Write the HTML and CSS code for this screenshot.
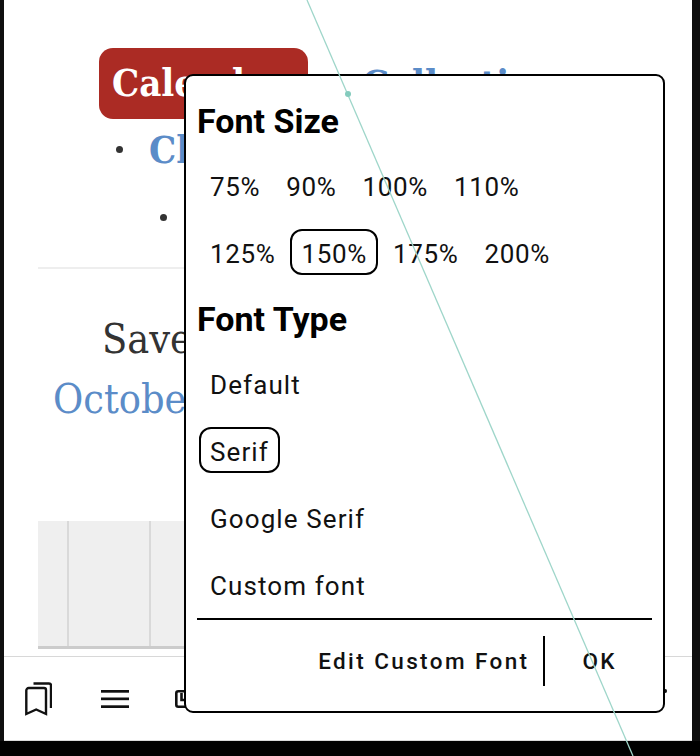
FILE: index.html
```html
<!DOCTYPE html>
<html lang="en">
<head>
<meta charset="utf-8">
<title>Font settings</title>
<link rel="stylesheet" href="styles.css">
</head>
<body>
<div class="screen">
  <main class="page">
    <nav class="nav">
      <div class="nav-top">
        <a class="pill">Calendar</a>
        <a class="nav-link">Collections</a>
      </div>
      <div class="nav-item"><span class="bullet"></span><a class="nav-link">Classes</a></div>
      <div class="nav-sub"><span class="bullet"></span></div>
    </nav>
    <hr class="rule">
    <p class="save">Save the date</p>
    <p class="date">October 2024</p>
    <div class="table"><i class="c1"></i><i class="c2"></i></div>
  </main>
  <footer class="toolbar">
    <svg class="i-book" viewBox="0 0 27 34" width="27" height="34" fill="none" stroke="#111" stroke-width="2.4"><path d="M1.3 32V8.5a2.5 2.5 0 0 1 2.5-2.5H19a2 2 0 0 1 2 2V32l-9.800-4.500Z"/><path d="M8.500 1.500H24a2 2 0 0 1 2 2V26"/></svg>
    <svg class="i-menu" viewBox="0 0 28 18" width="28" height="18" fill="#111"><rect y="0" width="28" height="2.700"/><rect y="7.500" width="28" height="2.700"/><rect y="15.300" width="28" height="2.700"/></svg>
    <svg class="i-clock" viewBox="0 0 24 18" width="24" height="18" fill="none" stroke="#111" stroke-width="2.600"><rect x="1.300" y="1.300" width="21" height="15.400" rx="2"/><path d="M6.500 3v7h4"/></svg>
    <span class="i-dot"></span>
  </footer>
</div>
<div class="bottom"></div>

<section class="dialog">
  <h2 class="title">Font Size</h2>
  <div class="row first">
    <span class="opt">75%</span><span class="opt">90%</span><span class="opt">100%</span><span class="opt">110%</span>
  </div>
  <div class="row">
    <span class="opt">125%</span><span class="opt on">150%</span><span class="opt">175%</span><span class="opt">200%</span>
  </div>
  <h2 class="title second">Font Type</h2>
  <div class="list">
    <span class="opt">Default</span>
    <span class="opt on">Serif</span>
    <span class="opt">Google Serif</span>
    <span class="opt">Custom font</span>
  </div>
  <div class="actions">
    <span class="act edit">Edit Custom Font</span>
    <span class="act ok">OK</span>
  </div>
</section>

<svg class="guide" viewBox="0 0 700 756" width="700" height="756"><line x1="307" y1="0" x2="633" y2="756" stroke="#9fd6ca" stroke-width="1.300"/><circle cx="348" cy="94" r="3" fill="#84cbbd"/></svg>
</body>
</html>
```
FILE: styles.css
```css
* { box-sizing: border-box; }
html, body { margin: 0; padding: 0; }
body {
  width: 700px;
  height: 756px;
  background: #0f0f0f;
  overflow: hidden;
  position: relative;
}
.screen {
  margin-left: 4px;
  width: 688px;
  height: 741px;
  background: #fff;
  display: flex;
  flex-direction: column;
  border-bottom: 1px solid #d8d8d8;
}
.bottom { height: 15px; background: #000; margin-top: 0; }
.page {
  height: 652px;
  margin-bottom: 4px;
  padding: 48px 0 0 34px;
  overflow: hidden;
  font-family: "DejaVu Serif Condensed", "DejaVu Serif", serif;
}
.nav { height: 219px; }
.nav-top { display: flex; align-items: center; height: 71px; }
.pill {
  width: 209px;
  height: 71px;
  margin-left: 61px;
  padding-left: 13px;
  background: #ab2b24;
  border-radius: 14px;
  color: #fff;
  font-weight: 700;
  font-size: 38px;
  line-height: 69px;
  white-space: nowrap;
}
.nav-link {
  color: #5b8cc8;
  font-weight: 700;
  font-size: 38px;
  white-space: nowrap;
}
.nav-top .nav-link { margin-left: 54px; }
.nav-item { display: flex; align-items: center; height: 60px; padding-left: 78px; }
.nav-item .nav-link { margin-left: 26px; }
.bullet { width: 7px; height: 7px; border-radius: 50%; background: #333; flex: none; }
.nav-sub { display: flex; align-items: center; height: 76px; padding-left: 122px; }
.rule { margin: 0; width: 620px; border: 0; border-top: 2px solid #eee; }
.save {
  margin: 40px 0 0;
  padding-left: 64px;
  color: #333;
  font-size: 41px;
  line-height: 60px;
  white-space: nowrap;
}
.date {
  margin: 0;
  padding-left: 15px;
  color: #5b8cc8;
  font-size: 41px;
  line-height: 60px;
  white-space: nowrap;
}
.table {
  position: relative;
  margin-top: 92px;
  width: 620px;
  height: 128px;
  background: #efefef;
  border-bottom: 3px solid #ccc;
}
.table i { position: absolute; top: 0; bottom: 0; width: 2px; background: #d9d9d9; }
.c1 { left: 29px; }
.c2 { left: 111px; }
.toolbar {
  flex: 1;
  display: flex;
  align-items: flex-start;
  padding: 25px 25px 0 21px;
  border-top: 1px solid #d8d8d8;
}
.i-book { margin-right: 49px; }
.i-menu { margin: 8px 46px 0 0; }
.i-clock { margin-top: 8px; }
.i-dot { margin: 7px 0 0 auto; width: 3px; height: 4px; border-radius: 50%; background: #111; }

.dialog {
  position: absolute;
  left: 184px;
  top: 74px;
  width: 481px;
  height: 639px;
  padding: 25px 11px 0 11px;
  background: #fff;
  border: 2px solid #000;
  border-radius: 9px;
  color: #111;
  font-family: Roboto, sans-serif;
}
.title {
  margin: 0;
  color: #000;
  font-size: 34px;
  line-height: 40px;
  font-weight: 700;
}
.second { margin-top: 24px; }
.row { display: flex; gap: 4px; margin: 21px 0 0 2px; }
.first { margin-top: 21px; }
.opt {
  display: block;
  height: 46px;
  padding: 0 9px;
  border: 2px solid transparent;
  border-radius: 12px;
  font-size: 26px;
  line-height: 47px;
  letter-spacing: 0.65px;
  white-space: nowrap;
}
.opt.on { border-color: #000; }
.list { display: flex; flex-direction: column; align-items: flex-start; gap: 21px; margin: 21px 0 0 2px; }
.list .opt { letter-spacing: 1.1px; }
.actions {
  position: absolute;
  left: 11px;
  right: 11px;
  top: 542px;
  height: 68px;
  display: flex;
  justify-content: flex-end;
  align-items: center;
  padding-top: 15px;
  border-top: 2px solid #000;
}
.act {
  font-size: 22.5px;
  font-weight: 500;
  letter-spacing: 2.4px;
  line-height: 49px;
  white-space: nowrap;
}
.edit { padding: 1px 14px 0 0; border-right: 2px solid #000; }
.ok { padding: 1px 35px 0 37px; }
.guide { position: absolute; left: 0; top: 0; pointer-events: none; }
```
